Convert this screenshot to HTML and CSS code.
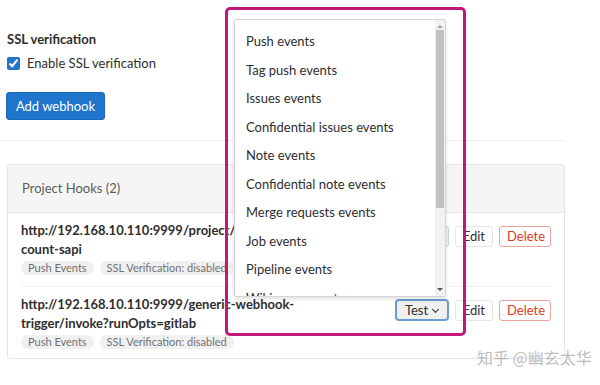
FILE: index.html
```html
<!DOCTYPE html>
<html lang="en">
<head>
    <meta charset="UTF-8">
    <meta name="viewport" content="width=device-width, initial-scale=1.0">
    <title>Webhooks</title>
    <link rel="stylesheet" href="styles.css">
</head>
<body>
    <div class="hooks-page">
        <div class="ssl-block">
            <div class="field-title">SSL verification</div>
            <label class="check-line">
                <input type="checkbox" class="check-box" checked>
                <span>Enable SSL verification</span>
            </label>
        </div>

        <button class="btn-primary">Add webhook</button>

        <hr class="page-rule">

        <div class="hooks-card">
            <div class="card-head">Project Hooks (2)</div>

            <div class="hook-row">
                <div class="hook-info">
                    <div class="hook-url">http://192.168.10.110:9999/project/gitlab-ac<br>count-sapi</div>
                    <div class="badges">
                        <span class="badge">Push Events</span>
                        <span class="badge">SSL Verification: disabled</span>
                    </div>
                </div>
                <div class="hook-actions">
                    <button class="btn btn-test">Test <span class="caret"></span></button>
                    <button class="btn">Edit</button>
                    <button class="btn btn-danger">Delete</button>
                </div>
            </div>

            <div class="hook-row">
                <div class="hook-info">
                    <div class="hook-url">http://192.168.10.110:9999/generic-webhook-trigger/invoke?runOpts=gitlab</div>
                    <div class="badges">
                        <span class="badge">Push Events</span>
                        <span class="badge">SSL Verification: disabled</span>
                    </div>
                </div>
                <div class="hook-actions">
                    <button class="btn btn-test is-focused">Test <span class="caret"></span></button>
                    <button class="btn">Edit</button>
                    <button class="btn btn-danger">Delete</button>
                </div>
            </div>
        </div>

        <div class="event-menu">
            <ul class="event-list">
                <li>Push events</li>
                <li>Tag push events</li>
                <li>Issues events</li>
                <li>Confidential issues events</li>
                <li>Note events</li>
                <li>Confidential note events</li>
                <li>Merge requests events</li>
                <li>Job events</li>
                <li>Pipeline events</li>
                <li>Wiki page events</li>
            </ul>
            <div class="menu-scroll">
                <span class="arrow-up"></span>
                <span class="thumb"></span>
                <span class="arrow-down"></span>
            </div>
        </div>

        <div class="highlight-box"></div>

        <div class="watermark">知乎 @幽玄太华</div>
    </div>
</body>
</html>
```

FILE: styles.css
```css
:root {
    --text: #2e2e2e;
    --muted: #5c5c5c;
    --line: #e5e5e5;
    --blue: #1f75cb;
    --red: #db3b21;
    --magenta: #c2177b;
}

body {
    margin: 0;
    background: #fff;
    color: var(--text);
    font-family: Lato, "Noto Sans", sans-serif;
    font-size: 13px;
}

.hooks-page {
    position: relative;
    width: 565px;
    height: 385px;
    padding: 31px 0 0 7px;
    box-sizing: border-box;
}

.field-title {
    font-weight: bold;
    line-height: 17px;
}

.check-line {
    display: flex;
    align-items: center;
    gap: 7px;
    margin-top: 6px;
    line-height: 18px;
}

.check-box {
    width: 13px;
    height: 13px;
    margin: 0;
    accent-color: var(--blue);
}

.btn-primary {
    display: block;
    margin: 20px 0 0 -1px;
    width: 99px;
    height: 28px;
    border: 1px solid #1b69b6;
    border-radius: 3px;
    background: var(--blue);
    color: #fff;
    font: inherit;
    font-size: 13px;
}

.page-rule {
    margin: 20px 0 0 -7px;
    width: 565px;
    border: none;
    border-top: 1px solid #eee;
}

.hooks-card {
    margin-top: 23px;
    border: 1px solid var(--line);
    border-radius: 3px;
}

.card-head {
    height: 47px;
    line-height: 47px;
    padding: 0 14px;
    background: #f5f5f5;
    border-bottom: 1px solid var(--line);
    color: var(--muted);
}

.hook-row {
    display: flex;
    align-items: flex-start;
    margin: 0 13px;
    padding: 8px 0 11px;
    border-bottom: 1px solid #f0f0f0;
}

.hook-row:last-child {
    border-bottom: none;
    padding-bottom: 9px;
}

.hook-info {
    flex: 1;
    min-width: 0;
}

.hook-url {
    max-width: 300px;
    font-weight: bold;
    line-height: 19px;
}

.badges {
    display: flex;
    gap: 6px;
    margin-top: 2px;
}

.badge {
    padding: 0 7px;
    line-height: 14px;
    border-radius: 8px;
    background: #f0f0f0;
    color: #707070;
    font-size: 11px;
}

.hook-actions {
    display: flex;
    gap: 6px;
    margin-top: 5px;
}

.btn {
    height: 21px;
    padding: 0 7px;
    border: 1px solid var(--line);
    border-radius: 3px;
    background: #fff;
    color: var(--text);
    font: inherit;
    font-size: 13px;
    line-height: 19px;
}

.btn-danger {
    width: 52px;
    border-color: #eba59a;
    color: var(--red);
}

.btn-test {
    width: 54px;
    background: #f0f0f0;
    border-color: #d0d0d0;
}

.btn-test.is-focused {
    height: 22px;
    margin-top: -1px;
    border: 2px solid #6c9bd0;
    border-radius: 4px;
}

.caret {
    display: inline-block;
    width: 4px;
    height: 4px;
    margin: 0 0 3px 2px;
    border-right: 1.5px solid var(--text);
    border-bottom: 1.5px solid var(--text);
    transform: rotate(45deg);
}

.event-menu {
    position: absolute;
    left: 234px;
    top: 19px;
    width: 212px;
    height: 278px;
    display: flex;
    background: #fff;
    border: 1px solid #d6d6d6;
    border-radius: 2px;
    box-shadow: 0 2px 4px rgba(0, 0, 0, 0.12);
    box-sizing: border-box;
    overflow: hidden;
}

.event-list {
    flex: 1;
    list-style: none;
    margin: 0;
    padding: 7px 0 0;
}

.event-list li {
    height: 28.5px;
    line-height: 28.5px;
    padding-left: 11px;
    white-space: nowrap;
}

.menu-scroll {
    width: 10px;
    display: flex;
    flex-direction: column;
    align-items: center;
    background: #f1f1f1;
}

.thumb {
    width: 8px;
    height: 178px;
    background: #c1c1c1;
    margin-top: 2px;
}

.arrow-up,
.arrow-down {
    width: 0;
    height: 0;
    border-left: 3px solid transparent;
    border-right: 3px solid transparent;
}

.arrow-up {
    margin-top: 5px;
    border-bottom: 3px solid #a3a3a3;
}

.arrow-down {
    margin-top: auto;
    margin-bottom: 5px;
    border-top: 3px solid #505050;
}

.highlight-box {
    position: absolute;
    left: 225px;
    top: 7px;
    width: 241px;
    height: 329px;
    border: 3px solid var(--magenta);
    border-radius: 5px;
    box-sizing: border-box;
}

.watermark {
    position: absolute;
    left: 477px;
    top: 345px;
    color: rgba(160, 160, 160, 0.7);
    font-family: "Noto Sans CJK SC", sans-serif;
    font-size: 16px;
    white-space: nowrap;
}
```
